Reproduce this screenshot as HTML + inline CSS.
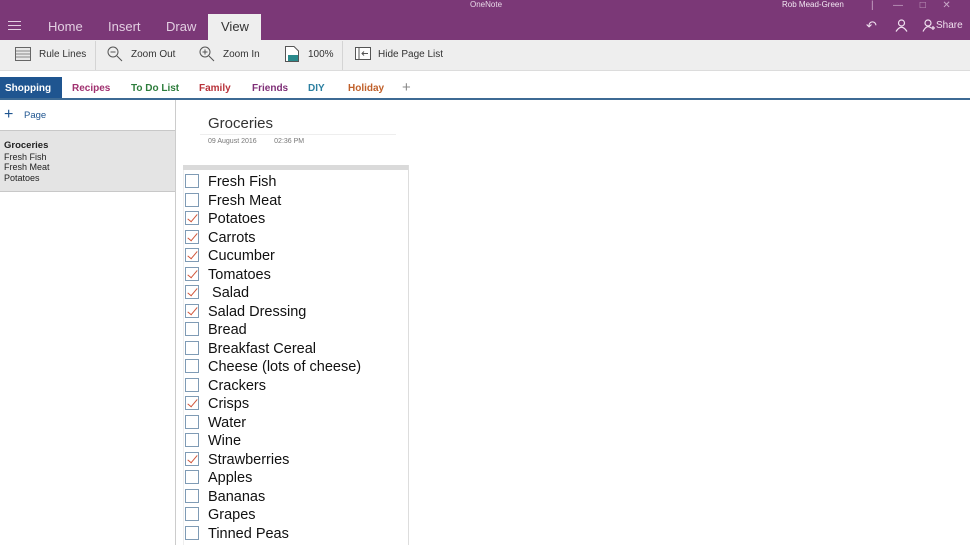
<!DOCTYPE html>
<html><head><style>
*{margin:0;padding:0;box-sizing:border-box}
body{width:970px;height:545px;overflow:hidden;background:#fff;font-family:"Liberation Sans",sans-serif;position:relative}
.abs{position:absolute}
.top{left:0;top:0;width:970px;height:40px;background:#7b3877}
.tab{top:19px;font-size:13px;color:#e3cfe2}
.rib{left:0;top:40px;width:970px;height:31px;background:#eeeeee;border-bottom:1px solid #dcdcdc}
.rb{top:49px;font-size:10px;color:#333}
.sec{top:83px;font-size:10px;font-weight:bold}
.item{left:185px;height:18px;font-size:14.5px;color:#111;white-space:nowrap}
.cb{display:inline-block;width:14px;height:14px;border:1px solid #7f9bb5;vertical-align:-2px;margin-right:9px;position:relative;background:#fff}
.cb.c::after{content:"";position:absolute;left:4px;top:0px;width:4px;height:9px;border:solid #d0553a;border-width:0 1.5px 1.5px 0;transform:rotate(40deg)}
</style></head><body>
<div class="abs top"></div>
<div class="abs" style="left:8px;top:21px;width:13px;height:1px;background:#e3cfe2;box-shadow:0 4px 0 #e3cfe2,0 8px 0 #e3cfe2"></div>
<div class="abs tab" style="left:48px">Home</div>
<div class="abs tab" style="left:108px">Insert</div>
<div class="abs tab" style="left:166px">Draw</div>
<div class="abs" style="left:208px;top:14px;width:53px;height:27px;background:#eeeeee"></div>
<div class="abs tab" style="left:221px;color:#333">View</div>
<div class="abs" style="left:470px;top:0;font-size:8px;color:#e8d8e8">OneNote</div>
<div class="abs" style="left:782px;top:0;font-size:8px;color:#f3e8f3">Rob Mead-Green</div>
<div class="abs" style="left:871px;top:0;font-size:10px;color:#c9a8c8">|&nbsp;&nbsp;&nbsp;&nbsp;&nbsp;&nbsp;&nbsp;— &nbsp;&nbsp;&nbsp;&nbsp;&nbsp;□&nbsp;&nbsp;&nbsp;&nbsp;&nbsp;&nbsp;✕</div>
<div class="abs" style="left:866px;top:18px;font-size:13px;color:#f0e0ef">↶</div>
<svg class="abs" style="left:895px;top:19px" width="13" height="13"><circle cx="6.5" cy="4" r="3" fill="none" stroke="#f0e0ef" stroke-width="1.2"/><path d="M1 12.5 Q6.5 4 12 12.5" fill="none" stroke="#f0e0ef" stroke-width="1.2"/></svg>
<svg class="abs" style="left:922px;top:19px" width="13" height="13"><circle cx="6" cy="4" r="3" fill="none" stroke="#f0e0ef" stroke-width="1.2"/><path d="M1 12.5 Q5 5 9 9 M9 9 H13 M11 7 V11" fill="none" stroke="#f0e0ef" stroke-width="1.2"/></svg>
<div class="abs" style="left:936px;top:20px;font-size:10px;color:#f0e0ef">Share</div>
<div class="abs rib"></div>
<div class="abs" style="left:95px;top:41px;width:1px;height:29px;background:#d4d4d4"></div>
<div class="abs" style="left:342px;top:41px;width:1px;height:29px;background:#d4d4d4"></div>
<svg class="abs" style="left:15px;top:47px" width="16" height="14"><rect x="0.5" y="0.5" width="15" height="13" fill="#e8e8e8" stroke="#666"/><path d="M1 4H15M1 7H15M1 10H15" stroke="#888"/></svg>
<div class="abs rb" style="left:39px">Rule Lines</div>
<svg class="abs" style="left:107px;top:46px" width="16" height="16"><circle cx="6" cy="6" r="5" fill="none" stroke="#555"/><path d="M3.5 6H8.5M10 10L15 15" stroke="#555"/></svg>
<div class="abs rb" style="left:131px">Zoom Out</div>
<svg class="abs" style="left:199px;top:46px" width="16" height="16"><circle cx="6" cy="6" r="5" fill="none" stroke="#555"/><path d="M3.5 6H8.5M6 3.5V8.5M10 10L15 15" stroke="#555"/></svg>
<div class="abs rb" style="left:223px">Zoom In</div>
<svg class="abs" style="left:285px;top:46px" width="14" height="16"><path d="M0.5 0.5H9L13.5 5V15.5H0.5Z" fill="#fff" stroke="#555"/><rect x="3" y="9" width="10" height="6" fill="#2a8a8c"/></svg>
<div class="abs rb" style="left:308px">100%</div>
<svg class="abs" style="left:355px;top:47px" width="16" height="13"><rect x="0.5" y="0.5" width="15" height="12" fill="#fff" stroke="#555"/><path d="M4 1V12M13 6.5H7M9 4.5L7 6.5L9 8.5" stroke="#555" fill="none"/></svg>
<div class="abs rb" style="left:378px">Hide Page List</div>
<div class="abs" style="left:0;top:77px;width:62px;height:22px;background:#1f5590"></div>
<div class="abs sec" style="left:5px;color:#fff">Shopping</div>
<div class="abs sec" style="left:72px;color:#a0306f">Recipes</div>
<div class="abs sec" style="left:131px;color:#2d7d3c">To Do List</div>
<div class="abs sec" style="left:199px;color:#b8323a">Family</div>
<div class="abs sec" style="left:252px;color:#7e2d76">Friends</div>
<div class="abs sec" style="left:308px;color:#2b7fa0">DIY</div>
<div class="abs sec" style="left:348px;color:#c0602a">Holiday</div>
<div class="abs" style="left:402px;top:79px;font-size:15px;color:#888">+</div>
<div class="abs" style="left:0;top:98px;width:970px;height:2px;background:#3d6a94"></div>
<div class="abs" style="left:175px;top:100px;width:1px;height:445px;background:#ccc"></div>
<div class="abs" style="left:4px;top:106px;font-size:16px;color:#1f5590">+</div>
<div class="abs" style="left:24px;top:110px;font-size:9.5px;color:#1f5590">Page</div>
<div class="abs" style="left:0;top:130px;width:175px;height:62px;background:#e4e4e4;border-top:1px solid #c8c8c8;border-bottom:1px solid #c8c8c8"></div>
<div class="abs" style="left:4px;top:140px;font-size:9px;line-height:10.5px;color:#222"><b style="font-size:9.5px">Groceries</b><br>Fresh Fish<br>Fresh Meat<br>Potatoes</div>
<div class="abs" style="left:208px;top:115px;font-size:15px;color:#333">Groceries</div>
<div class="abs" style="left:200px;top:134px;width:196px;height:1px;background:#eee"></div>
<div class="abs" style="left:208px;top:138px;font-size:7px;color:#777">09 August 2016&nbsp;&nbsp;&nbsp;&nbsp;&nbsp;&nbsp;&nbsp;&nbsp;&nbsp;02:36 PM</div>
<div class="abs" style="left:183px;top:165px;width:226px;height:5px;background:#dadada"></div>
<div class="abs" style="left:408px;top:165px;width:1px;height:380px;background:#ddd"></div>
<div class="abs" style="left:183px;top:170px;width:1px;height:375px;background:#eee"></div>
<div class="abs item" style="top:174px"><span class="cb"></span>Fresh Fish</div>
<div class="abs item" style="top:192.5px"><span class="cb"></span>Fresh Meat</div>
<div class="abs item" style="top:211px"><span class="cb c"></span>Potatoes</div>
<div class="abs item" style="top:229.5px"><span class="cb c"></span>Carrots</div>
<div class="abs item" style="top:248px"><span class="cb c"></span>Cucumber</div>
<div class="abs item" style="top:266.5px"><span class="cb c"></span>Tomatoes</div>
<div class="abs item" style="top:285px"><span class="cb c"></span>&nbsp;Salad</div>
<div class="abs item" style="top:303.5px"><span class="cb c"></span>Salad Dressing</div>
<div class="abs item" style="top:322px"><span class="cb"></span>Bread</div>
<div class="abs item" style="top:340.5px"><span class="cb"></span>Breakfast Cereal</div>
<div class="abs item" style="top:359px"><span class="cb"></span>Cheese (lots of cheese)</div>
<div class="abs item" style="top:377.5px"><span class="cb"></span>Crackers</div>
<div class="abs item" style="top:396px"><span class="cb c"></span>Crisps</div>
<div class="abs item" style="top:414.5px"><span class="cb"></span>Water</div>
<div class="abs item" style="top:433px"><span class="cb"></span>Wine</div>
<div class="abs item" style="top:451.5px"><span class="cb c"></span>Strawberries</div>
<div class="abs item" style="top:470px"><span class="cb"></span>Apples</div>
<div class="abs item" style="top:488.5px"><span class="cb"></span>Bananas</div>
<div class="abs item" style="top:507px"><span class="cb"></span>Grapes</div>
<div class="abs item" style="top:525.5px"><span class="cb"></span>Tinned Peas</div>
</body></html>
